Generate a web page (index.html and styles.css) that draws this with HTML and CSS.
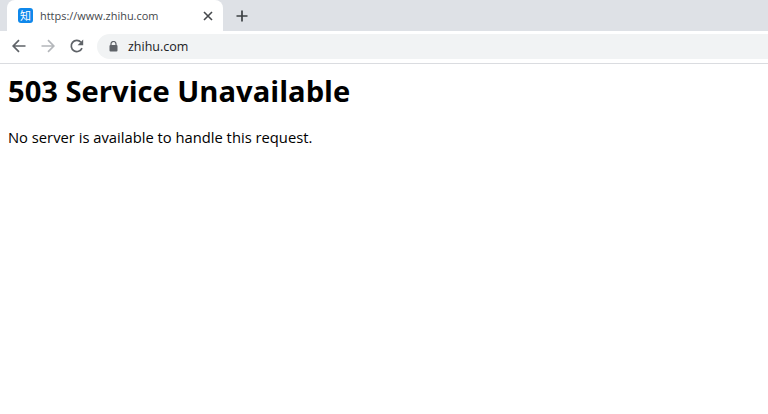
FILE: index.html
```html
<!DOCTYPE html>
<html lang="en">
<head>
    <meta charset="UTF-8">
    <title>503 Service Unavailable</title>
    <link rel="stylesheet" href="styles.css">
</head>
<body>
    <div class="tabstrip">
        <div class="tab">
            <span class="favicon">知</span>
            <span class="tab-title">https://www.zhihu.com</span>
            <svg class="tab-close" width="10" height="10" viewBox="0 0 10 10"><path d="M1 1l8 8M9 1l-8 8" stroke="#45484c" stroke-width="1.6" fill="none"/></svg>
        </div>
        <svg class="new-tab" width="12" height="12" viewBox="0 0 12 12"><path d="M6 0.5v11M0.5 6h11" stroke="#3c4043" stroke-width="1.7" fill="none"/></svg>
    </div>
    <div class="toolbar">
        <svg class="nav-icon" width="16" height="16" viewBox="0 0 16 16"><path d="M14.5 8H2.5M8 2.2L2.2 8 8 13.8" stroke="#5f6368" stroke-width="1.7" fill="none"/></svg>
        <svg class="nav-icon" width="16" height="16" viewBox="0 0 16 16"><path d="M1.5 8h12M8 2.2L13.8 8 8 13.8" stroke="#b4b7bb" stroke-width="1.7" fill="none"/></svg>
        <svg class="nav-icon" width="16" height="16" viewBox="0 0 16 16"><path d="M13 10.2A5.6 5.6 0 1 1 12 4.2" stroke="#5f6368" stroke-width="1.7" fill="none"/><path d="M14.2 1.6v5.6H8.6z" fill="#5f6368"/></svg>
        <div class="omnibox">
            <svg width="9" height="11" viewBox="0 0 9 11"><path d="M2 4.5V3a2.5 2.5 0 0 1 5 0v1.5" stroke="#5f6368" stroke-width="1.2" fill="none"/><rect x="0.5" y="4" width="8" height="6.5" rx="1" fill="#5f6368"/></svg>
            <span class="url">zhihu.com</span>
        </div>
    </div>
    <div class="page">
        <h1>503 Service Unavailable</h1>
        <p>No server is available to handle this request.</p>
    </div>
</body>
</html>
```

FILE: styles.css
```css
body {
    margin: 0;
    background-color: #ffffff;
    font-family: "Open Sans", "Noto Sans", sans-serif;
    overflow: hidden;
}

.tabstrip {
    display: flex;
    align-items: center;
    height: 31px;
    padding-left: 7px;
    background-color: #dee1e6;
}

.tab {
    display: flex;
    align-items: center;
    width: 216px;
    height: 31px;
    padding: 0 10px 0 11px;
    box-sizing: border-box;
    background-color: #ffffff;
    border-radius: 8px 8px 0 0;
}

.favicon {
    width: 15px;
    height: 15px;
    margin-right: 7px;
    border-radius: 3px;
    background-color: #0f88eb;
    color: #ffffff;
    font-family: "Noto Sans CJK SC", sans-serif;
    font-size: 11px;
    line-height: 15px;
    text-align: center;
}

.tab-title {
    flex: 1;
    font-size: 10.95px;
    color: #45484c;
}

.new-tab {
    margin-left: 13px;
}

.toolbar {
    display: flex;
    align-items: center;
    height: 30px;
    padding-left: 11px;
    padding-bottom: 2px;
    border-bottom: 1px solid #dadce0;
    background-color: #ffffff;
}

.nav-icon {
    margin-right: 13px;
}

.omnibox {
    display: flex;
    align-items: center;
    flex: 1;
    height: 25px;
    margin-left: -1px;
    padding-left: 12px;
    background-color: #f1f3f4;
    border-radius: 13px 0 0 13px;
}

.url {
    margin-left: 10px;
    font-size: 12.5px;
    color: #202124;
}

.page {
    padding: 0 8px;
}

h1 {
    margin: 8px 0 0;
    font-size: 29.15px;
    line-height: 38px;
    font-weight: bold;
    color: #000000;
}

p {
    margin: 17px 0 0;
    font-size: 14.75px;
    line-height: 20px;
    color: #000000;
}
```
